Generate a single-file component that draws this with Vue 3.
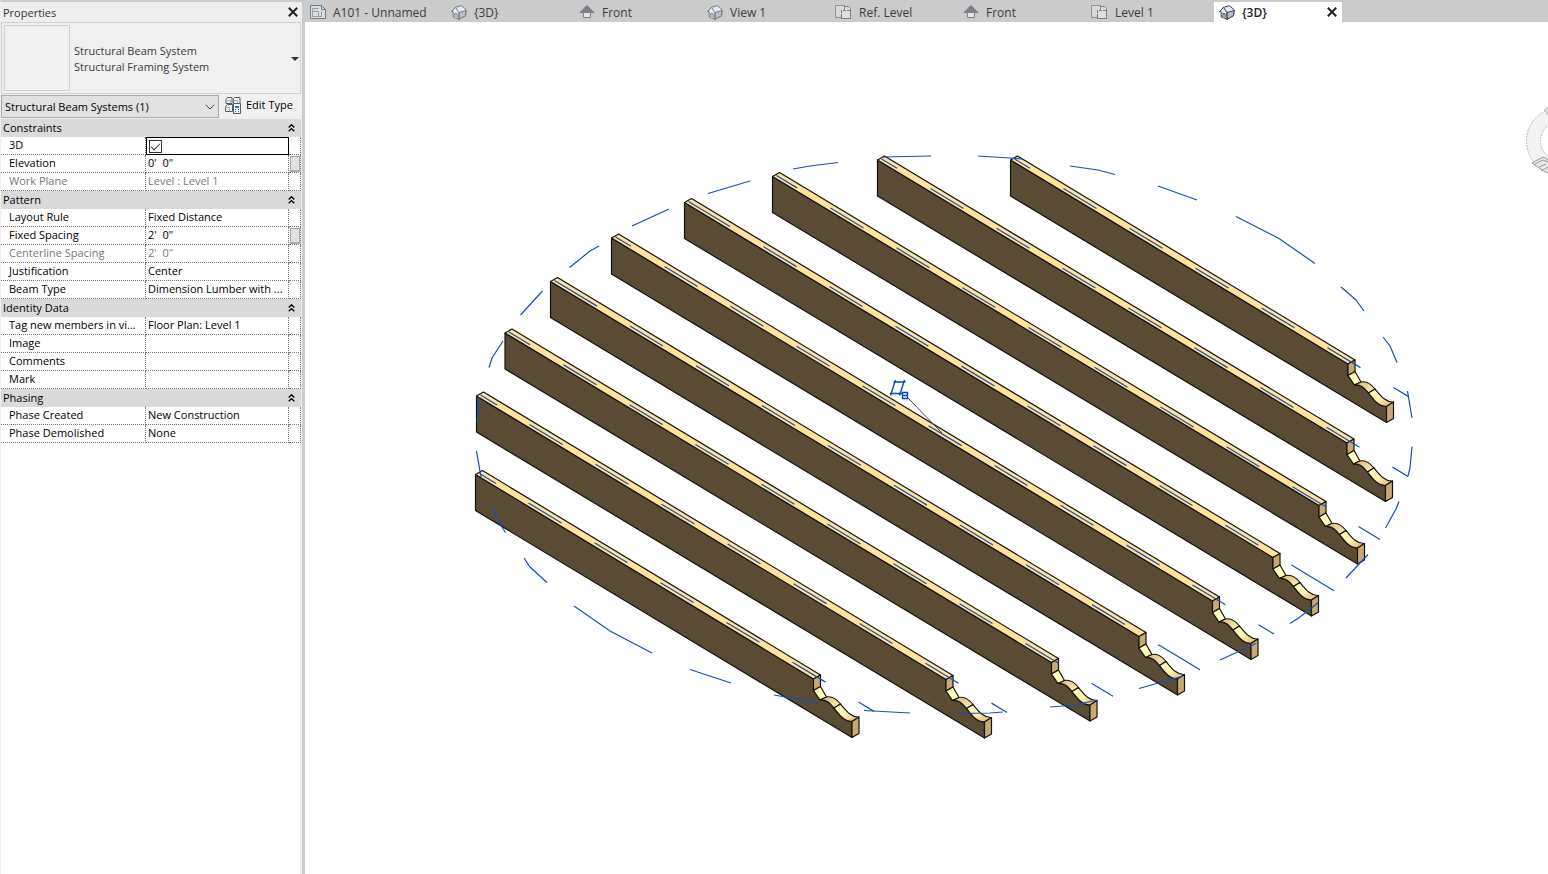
<script setup>
import { reactive, ref } from 'vue'

const tabs = [
  { label: 'A101 - Unnamed', icon: 'sheet' },
  { label: '{3D}', icon: 'house' },
  { label: 'Front', icon: 'elevation' },
  { label: 'View 1', icon: 'house' },
  { label: 'Ref. Level', icon: 'plan' },
  { label: 'Front', icon: 'elevation' },
  { label: 'Level 1', icon: 'plan' },
  { label: '{3D}', icon: 'house', active: true }
]

const is3d = ref(true)

const groups = reactive([
  {
    name: 'Constraints',
    open: true,
    rows: [
      { label: '3D', check: true },
      { label: 'Elevation', value: "0'  0\"", more: true },
      { label: 'Work Plane', value: 'Level : Level 1', readonly: true }
    ]
  },
  {
    name: 'Pattern',
    open: true,
    rows: [
      { label: 'Layout Rule', value: 'Fixed Distance' },
      { label: 'Fixed Spacing', value: "2'  0\"", more: true },
      { label: 'Centerline Spacing', value: "2'  0\"", readonly: true },
      { label: 'Justification', value: 'Center' },
      { label: 'Beam Type', value: 'Dimension Lumber with ...' }
    ]
  },
  {
    name: 'Identity Data',
    open: true,
    rows: [
      { label: 'Tag new members in vi...', value: 'Floor Plan: Level 1' },
      { label: 'Image', value: '' },
      { label: 'Comments', value: '' },
      { label: 'Mark', value: '' }
    ]
  },
  {
    name: 'Phasing',
    open: true,
    rows: [
      { label: 'Phase Created', value: 'New Construction' },
      { label: 'Phase Demolished', value: 'None' }
    ]
  }
])

// x, y: top left front corner; ex, ey: lower right front corner.
// first: end of the first dash, next: start of the repeating dashes, end: end of the last dash.
const beamData = [
  { x: 1010.5, y: 160, ex: 1386.5, ey: 422.5, first: 1030, next: 1063.5, end: 1409 },
  { x: 877.5, y: 160, ex: 1385.5, ey: 501.5, first: 897, next: 930.5, end: 1408 },
  { x: 772.5, y: 176.5, ex: 1357.5, ey: 564, first: 797, next: 830.5, end: 1380 },
  { x: 684.5, y: 202.5, ex: 1311.5, ey: 616, first: 730, next: 763.5, end: 1334 },
  { x: 611.5, y: 238, ex: 1251, ey: 659.5, first: 631, next: 664.5, end: 1274 },
  { x: 550.5, y: 281.5, ex: 1177.5, ey: 695, first: 597, next: 630, end: 1200 },
  { x: 505, y: 333, ex: 1090, ey: 721, first: 530, next: 563.5, end: 1113 },
  { x: 476.5, y: 396, ex: 984.5, ey: 738, first: 497, next: 529.5, end: 1007 },
  { x: 475.5, y: 474.5, ex: 852, ey: 737.5, first: 496, next: 528.5, end: 874 }
]

const SLOPE = 0.603

const beams = beamData.map((b) => {
  const p = (dx, dy) => `${b.ex + dx} ${b.ey + dy}`
  const s = (dx, dy) => `${b.x + dx} ${b.y + dy}`
  const y = (x) => b.y - 1 + SLOPE * (x - b.x - 4)
  const seg = (a, c) => `M${a} ${y(a)}L${c} ${y(c)}`
  let line = seg(b.x + 4, b.first)
  for (let x = b.next; x < b.end; x += 66) line += seg(x, Math.min(x + (b.end - x < 50 ? 50 : 33), b.end))
  return {
    side: `M${s(0, 0)}L${p(-38.5, -58.5)}L${p(-38.5, -47)}L${p(-32, -37.5)}C${p(-25, -38)} ${p(-22, -34)} ${p(-18, -29.5)}C${p(-13, -23)} ${p(-8, -16)} ${p(0, -16)}L${p(0, 0)}L${s(0, 36)}Z`,
    top: `M${s(0, 0)}L${s(7, -4)}L${p(-31.5, -62.5)}L${p(-38.5, -58.5)}Z`,
    post: `M${p(-38.5, -58.5)}L${p(-31.5, -62.5)}L${p(-31.5, -51)}L${p(-38.5, -47)}Z`,
    chamfer: `M${p(-38.5, -47)}L${p(-31.5, -51)}L${p(-25.5, -40.5)}L${p(-32, -37.5)}Z`,
    upper: `M${p(-32, -37.5)}L${p(-25.5, -40.5)}C${p(-19, -42)} ${p(-15, -38)} ${p(-11.5, -33.5)}L${p(-18, -29.5)}C${p(-22, -34)} ${p(-25, -38)} ${p(-32, -37.5)}Z`,
    lower: `M${p(-18, -29.5)}L${p(-11.5, -33.5)}C${p(-6, -27)} ${p(-1, -20)} ${p(7, -20.5)}L${p(0, -16)}C${p(-8, -16)} ${p(-13, -23)} ${p(-18, -29.5)}Z`,
    cap: `M${p(0, -16)}L${p(7, -20.5)}L${p(7, -4)}L${p(0, 0)}Z`,
    line
  }
})

const outline = [
  '883,157 931,156', '978,156 1010,158 1022,159', '1070,166 1098,170 1115,174.5',
  '1158,186 1197,200', '1236,216.5 1279,238.5 1315,263.5', '1341,287 1356,300 1364,311',
  '1383,337 1390,346 1397,362.5', '1407.5,391 1412,418', '1412,446.5 1410,468 1408,476',
  '1399,501.5 1396,509 1385.5,528', '1368,554.5 1346,578', '1319,602 1300,617 1290,623.5',
  '1256,643.5 1220,660', '1183,676 1139,688.5', '1097,700 1075,705 1050,707',
  '1003,712 990,713 958,713.5', '910,713 864,710.5', '818,703 774,695', '731,683 690,669.5',
  '652,653 610,631 574,606', '547,582.5 530,567 524,558', '505.5,532.5 500,524 492,506.5',
  '481,477 476.5,451', '477,422 479,397', '489,367.5 492,358 503,341', '520.5,315 542.5,291',
  '569.5,267.5 590,251 599,246', '632,226 669,209', '708,193.5 750,181', '793,169 810,166 838,162.5'
]
</script>

<template>
  <div class="app">
    <aside class="panel">
      <header class="panel-head">
        <h1>Properties</h1>
        <button class="close" type="button" aria-label="Close properties">
          <svg width="10" height="10" viewBox="0 0 10 10"><path d="M.8.8 9.2 9.2M9.2.8.8 9.2" /></svg>
        </button>
      </header>

      <button class="type-box" type="button">
        <span class="thumb"></span>
        <span class="type-name">Structural Beam System<br />Structural Framing System</span>
        <svg class="caret" width="8" height="4" viewBox="0 0 8 4"><path d="M0 0h8L4 4z" /></svg>
      </button>

      <div class="filter">
        <div class="combo">
          <select aria-label="Selected category">
            <option>Structural Beam Systems (1)</option>
          </select>
          <svg class="combo-arrow" width="10" height="6" viewBox="0 0 10 6"><path d="M.8.8 5 5 9.2.8" /></svg>
        </div>
        <button class="edit-type" type="button">
          <svg width="17" height="17" viewBox="0 0 17 17" fill="#f4f5f8" stroke="#565b66">
            <path d="M2.5 .5h4.500v6h-6v-4zM9.500 .5h5.500v6H8.500v-5zM2.500 7.500h5v7h-7v-5z" />
            <path d="M.5 3.500h5v3M8.500 3.500h4v3M.5 10.500h4v4" stroke="#a9adb6" fill="none" />
            <path d="M8.500 6.500h7v10h-7z" />
            <path d="M10 9h4v2h-4z" fill="#2d6fc0" stroke="none" />
            <path d="M10 12h1v1h-1zM13 12h1v1h-1zM10 14h1v1h-1zM13 14h1v1h-1z" fill="#3f5f8c" stroke="none" />
          </svg>
          Edit Type
        </button>
      </div>

      <table class="props">
        <colgroup>
          <col class="c-label" />
          <col />
          <col class="c-more" />
        </colgroup>
        <tbody v-for="g in groups" :key="g.name">
          <tr class="group">
            <th colspan="3" scope="rowgroup">
              <div class="group-bar">
                <span>{{ g.name }}</span>
                <button type="button" :aria-label="'Toggle ' + g.name" @click="g.open = !g.open">
                  <svg width="7" height="8" viewBox="0 0 7 8"><path d="M.7 3.500 3.500.8l2.800 2.700M.7 7.300l2.800-2.700 2.800 2.700" /></svg>
                </button>
              </div>
            </th>
          </tr>
          <template v-if="g.open">
            <tr v-for="r in g.rows" :key="r.label" :class="{ readonly: r.readonly }">
              <th scope="row">
                <label v-if="r.check" for="is3d">{{ r.label }}</label>
                <template v-else>{{ r.label }}</template>
              </th>
              <td :class="{ current: r.check }">
                <input v-if="r.check" id="is3d" v-model="is3d" type="checkbox" />
                <template v-else>{{ r.value }}</template>
              </td>
              <td class="more">
                <button v-if="r.more" type="button" :aria-label="'Associate ' + r.label"></button>
              </td>
            </tr>
          </template>
        </tbody>
      </table>
    </aside>

    <main class="work">
      <nav class="tabs">
        <div v-for="(t, i) in tabs" :key="i" class="tab" :class="{ active: t.active }">
          <button class="tab-name" type="button">
            <svg v-if="t.icon === 'sheet'" width="16" height="14" viewBox="0 0 16 14" fill="none" stroke="#777c83">
              <path d="M.5.5h11l4 4v9H.5z" fill="#dcdddf" />
              <path d="M11.500.5v4h4" />
              <path d="M2.500 3.500h6M2.500 6.500h6v5h-6zM2.500 3.500v3M11.500 6.500v5h-3" stroke="#8f9eac" />
            </svg>
            <svg v-else-if="t.icon === 'house'" width="16" height="15" viewBox="0 0 16 15" :stroke="t.active ? '#3d4450' : '#747a84'" stroke-linejoin="round">
              <path d="M.7 6.500 4.500 2.300 10.500.7l4.600 4-.6 6-6.500 3.600-5.800-2.400V6.800z" fill="#e8eaee" />
              <path d="M8 7.500 15 5.500l-.5 5.200L8 14.300z" fill="#b7c0cd" />
              <path d="M4.500 2.300 8 7.500v6.800M.7 6.500l3.800-4.200" fill="none" />
              <path d="M4 12.500V8.300l2 .5v4.600" fill="#f8f8f8" />
            </svg>
            <svg v-else-if="t.icon === 'elevation'" width="16" height="14" viewBox="0 0 16 14">
              <path d="M0 8 8 0l8 8z" fill="#7c8086" />
              <path d="M4.500 7.500h7v5h-7z" fill="#e4e5e7" stroke="#7c8086" />
            </svg>
            <svg v-else width="17" height="14" viewBox="0 0 17 14" fill="#d9dadc" stroke="#777b82">
              <path d="M6.500 12.500h-6V.5h9v4" stroke="#8d9299" />
              <path d="M9.500 1.500h4l2 2v10h-9v-2" fill="#dedfe1" />
              <path d="M6.500 12V5.500h9M9.500 1.500v4" fill="none" stroke-dasharray="3 1" />
            </svg>
            <span>{{ t.label }}</span>
          </button>
          <button v-if="t.active" class="close" type="button" aria-label="Close view">
            <svg width="10" height="10" viewBox="0 0 10 10"><path d="M.8.8 9.200 9.200M9.200.8.8 9.200" /></svg>
          </button>
        </div>
      </nav>

      <svg class="scene" viewBox="305 22 1243 852" role="img" aria-label="Structural beam system">
        <defs>
          <linearGradient id="upperTone" x1="0" y1="0" x2="1" y2="1">
            <stop offset="0" stop-color="#d9b47d" />
            <stop offset="1" stop-color="#fff5bc" />
          </linearGradient>
          <linearGradient id="lowerTone" x1="0" y1="0" x2="1" y2="1">
            <stop offset="0" stop-color="#ffffc0" />
            <stop offset=".5" stop-color="#fff2b4" />
            <stop offset="1" stop-color="#d2aa72" />
          </linearGradient>
        </defs>
        <g v-for="(b, i) in beams" :key="i" class="beam">
          <path :d="b.side" fill="#594b34" />
          <path :d="b.top" fill="#ffe2a0" />
          <path :d="b.post" fill="#c8a874" />
          <path :d="b.chamfer" fill="#ffffc2" />
          <path :d="b.upper" fill="url(#upperTone)" />
          <path :d="b.lower" fill="url(#lowerTone)" />
          <path :d="b.cap" fill="#c8a874" />
          <path :d="b.line" class="sketch" />
        </g>
        <polyline v-for="o in outline" :key="o" :points="o" class="sketch" />

        <g fill="none" stroke="#0a49b8" stroke-width="1.4">
          <path d="M893.500 382h12M890 393.500h12M895.500 380l-5 15.500M904.500 380l-5 15.500" />
          <path d="M902.500 392.500h5v6h-5zM902.500 395.500h5" />
        </g>
        <path d="M908 398 942 433" fill="none" stroke="#444" />

        <g fill="#f3f3f3" stroke="#bcbcbc">
          <circle cx="1560" cy="141" r="33.500" stroke-dasharray="2 1" />
          <circle cx="1560" cy="141" r="19.500" fill="#fff" stroke-dasharray="2 1" />
          <path d="m1544 110 4-3 6 4-6 4z" fill="#ddd" />
          <path d="m1532 163 11-6 8 4v12l-6-1z" fill="#e9e9e9" stroke="#999" />
          <path d="m1535 164 8-4 5 2M1539 167l7-3M1541 171l7-4" fill="none" stroke="#999" />
        </g>
      </svg>
    </main>
  </div>
</template>

<style>
body {
  margin: 0;
  background: #fff;
}
</style>

<style scoped>
.app {
  display: flex;
  height: 100vh;
  overflow: hidden;
  background: #fff;
  color: #000;
  font: 12px/16px "Open Sans", "Noto Sans", sans-serif;
}
button,
select {
  margin: 0;
  padding: 0;
  border: 0;
  background: none;
  color: inherit;
  font: inherit;
  text-align: left;
}
svg {
  display: block;
  flex: none;
}
.panel {
  box-sizing: border-box;
  flex: none;
  width: 305px;
  border-top: 2px solid #cbcbcb;
  border-right: 3px solid #cbcbcb;
  border-left: 1px solid #efefef;
  background: linear-gradient(#efefef, #efefef) right / 2px 100% no-repeat;
  display: flex;
  flex-direction: column;
  font-size: 11px;
}
.panel-head {
  display: flex;
  align-items: center;
  justify-content: space-between;
  height: 20px;
  padding: 0 4px 0 2px;
  background: #efefef;
}
h1 {
  margin: 0;
  padding-top: 2px;
  color: #333;
  font: inherit;
}
.close path {
  fill: none;
  stroke: #222;
  stroke-width: 2;
}
.type-box {
  display: flex;
  align-items: center;
  box-sizing: border-box;
  height: 72px;
  margin-right: 1px;
  padding: 0 1px 0 2px;
  border: 1px solid #cfcfcf;
  background: #f0f0f0;
  color: #3a3a3a;
}
.thumb {
  width: 64px;
  height: 64px;
  margin-right: 4px;
  border: 1px solid #cfcfcf;
}
.type-name {
  flex: 1;
  padding-top: 2px;
}
.caret {
  margin-top: 2px;
  fill: #333;
}
.filter {
  display: flex;
  align-items: center;
  height: 25px;
  background: #f0f0f0;
}
.combo {
  position: relative;
  flex: none;
  width: 218px;
}
.combo select {
  appearance: none;
  display: block;
  width: 100%;
  height: 23px;
  padding: 0 3px;
  border: 1px solid #a9a9a9;
  border-radius: 0;
  background: #e1e1e1;
}
.combo-arrow {
  position: absolute;
  top: 9px;
  right: 4px;
  fill: none;
  stroke: #444;
  pointer-events: none;
}
.edit-type {
  display: flex;
  align-items: center;
  gap: 4px;
  margin: 0 0 3px 6px;
  white-space: nowrap;
}
.props {
  width: 300px;
  table-layout: fixed;
  border-spacing: 0;
}
.c-label {
  width: 145px;
}
.c-more {
  width: 12px;
}
.props th,
.props td {
  box-sizing: border-box;
  height: 18px;
  padding: 0 0 1px 2px;
  border-right: 1px dotted #777;
  border-bottom: 1px dotted #777;
  font-weight: normal;
  line-height: 16px;
  text-align: left;
  vertical-align: middle;
  white-space: pre;
  overflow: hidden;
}
.props th {
  padding-left: 8px;
}
.props .group th {
  padding: 0 6px 0 2px;
  border: 0;
  background: #dadada;
}
.group-bar {
  display: flex;
  align-items: center;
  justify-content: space-between;
}
.group-bar path {
  fill: none;
  stroke: #000;
  stroke-width: 1.4;
}
.props .readonly th,
.props .readonly td {
  color: #777;
}
.props td.current {
  padding: 0 0 0 3px;
  outline: 1px solid #000;
  outline-offset: -1px;
}
.current input {
  appearance: none;
  display: block;
  box-sizing: border-box;
  width: 13px;
  height: 13px;
  margin: 1px 0 0;
  border: 1px solid #333;
  background: #fff;
}
.current input:checked::before {
  content: "";
  display: block;
  box-sizing: border-box;
  width: 9px;
  height: 5px;
  margin: 2px 1px;
  border: solid #333;
  border-width: 0 0 1px 1px;
  transform: rotate(-45deg);
}
.props td.more {
  padding: 0 0 0 1px;
}
.more button {
  display: block;
  box-sizing: border-box;
  width: 10px;
  height: 16px;
  border: 1px solid #aaa;
  border-bottom-width: 2px;
  background: #e1e1e1;
}
.work {
  flex: 1;
  min-width: 0;
  display: flex;
  flex-direction: column;
}
.tabs {
  display: flex;
  flex: none;
  height: 20px;
  padding-top: 2px;
  background: #cbcbcb;
  color: #3c3c3c;
}
.tab {
  display: flex;
  align-items: center;
  justify-content: space-between;
  box-sizing: border-box;
  flex: none;
  width: 128px;
  padding: 0 5px;
}
.tab:first-child {
  width: 141px;
}
.tab-name {
  display: flex;
  align-items: center;
  gap: 7px;
  white-space: nowrap;
}
.tab-name span {
  padding-top: 2px;
}
.tab.active {
  background: #fff;
  color: #222;
  font-weight: 600;
}
.scene {
  flex: 1;
  width: 100%;
  min-height: 0;
}
.beam path {
  stroke: #16130d;
  stroke-width: 1.2;
  stroke-linejoin: round;
}
.scene .sketch {
  fill: none;
  stroke: #174dc0;
  stroke-width: 1.2;
}
</style>
